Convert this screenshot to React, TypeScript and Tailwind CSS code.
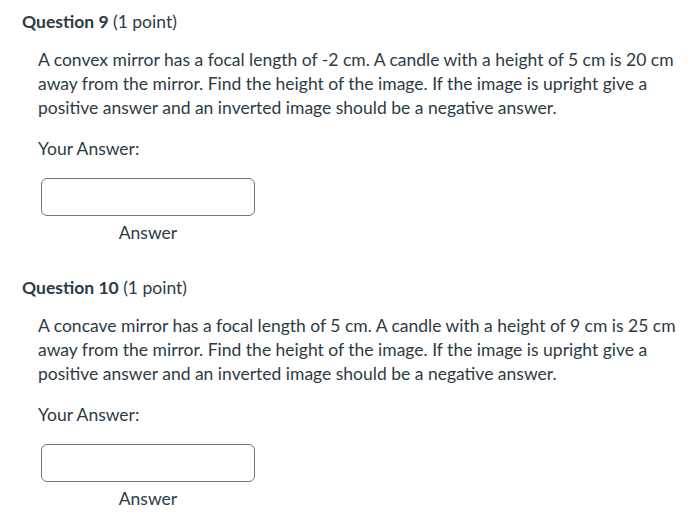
import React from 'react';

type Q = { num: number; text: string };

const questions: Q[] = [
  {
    num: 9,
    text: 'A convex mirror has a focal length of -2 cm. A candle with a height of 5 cm is 20 cm away from the mirror. Find the height of the image. If the image is upright give a positive answer and an inverted image should be a negative answer.',
  },
  {
    num: 10,
    text: 'A concave mirror has a focal length of 5 cm. A candle with a height of 9 cm is 25 cm away from the mirror. Find the height of the image. If the image is upright give a positive answer and an inverted image should be a negative answer.',
  },
];

function Question({ q }: { q: Q }) {
  return (
    <div className="pb-[31px]">
      <h2 className="pl-[22px] text-[17.5px] leading-[24px] text-[#2d3b45]">
        <span className="font-bold">Question {q.num}</span> (1 point)
      </h2>
      <p className="mt-[14px] pl-[38px] pr-[10px] text-[17.5px] leading-[24px] text-[#2d3b45]">{q.text}</p>
      <p className="mt-[17px] pl-[38px] text-[17.5px] leading-[24px] text-[#2d3b45]">Your Answer:</p>
      <div className="mt-[17px] ml-[41px] flex w-[214px] flex-col items-center">
        <input
          type="text"
          aria-label="Answer"
          className="h-[38px] w-full rounded-[6px] border border-[#6b7780] bg-white"
        />
        <span className="mt-[5px] text-[17.5px] leading-[24px] text-[#2d3b45]">Answer</span>
      </div>
    </div>
  );
}

export default function App() {
  return (
    <div className="min-h-screen bg-white pt-[10px] font-['Lato',sans-serif]">
      {questions.map((q) => (
        <Question key={q.num} q={q} />
      ))}
    </div>
  );
}
